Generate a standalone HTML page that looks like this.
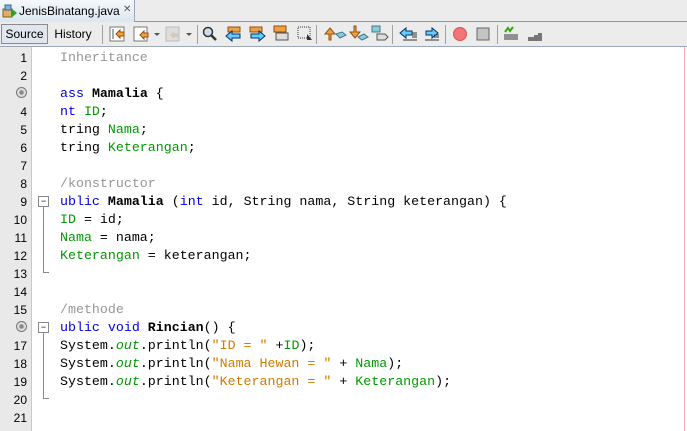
<!DOCTYPE html>
<html><head><style>
body{margin:0;width:687px;height:431px;overflow:hidden;background:#fff;font-family:"Liberation Sans",sans-serif;position:relative}
.tabbar{position:absolute;left:0;top:0;width:687px;height:21px;background:#ececec;border-bottom:1px solid #8a96a6}
.tab{position:absolute;left:0;top:0;width:134px;height:22px;background:linear-gradient(#f4f8fc,#dce6f0);border-right:1px solid #9aa8b8;font-size:12px}
.tb{position:absolute;left:0;top:22px;width:687px;height:24px;background:#ececec;border-bottom:1px solid #9aa8b8}
.btn{position:absolute;top:3px;height:18px;font-size:12px;line-height:18px;text-align:center}
.gut{position:absolute;left:0;top:47px;width:31px;height:384px;background:#e9e9e9;border-right:1px solid #c8c8c8}
.ln{position:absolute;left:0;width:27px;text-align:right;font-size:12px;color:#000;height:18px;line-height:18px}
.cd{position:absolute;left:60px;font-family:"Liberation Mono",monospace;font-size:13.3px;height:18px;line-height:18px;white-space:pre;color:#000}
.k{color:#0000e6}.g{color:#009900}.c{color:#969696}.s{color:#ce7b00}.i{color:#009900;font-style:italic}.b{font-weight:bold}
</style></head><body>
<div class="tabbar"><div class="tab">
<svg style="position:absolute;left:2px;top:3px" width="16" height="16"><rect x="1" y="6" width="9" height="8" fill="#e0b060" stroke="#806020"/><polygon points="9,5 15,10 9,15" fill="#30a030"/><rect x="3" y="2" width="6" height="5" fill="#80b0e0" stroke="#406080"/></svg>
<span style="position:absolute;left:19px;top:4px">JenisBinatang.java</span>
<span style="position:absolute;left:123px;top:4px;font-size:10px;color:#555">✕</span></div></div>
<div class="tb">
<div class="btn" style="left:1px;width:45px;border:1px solid #8a8a8a;background:#dfe6ee;top:2px">Source</div>
<div class="btn" style="left:52px;width:42px">History</div>
<svg style="position:absolute;left:0;top:0" width="687" height="24">
<g fill="#a0a0a0"><rect x="102" y="3" width="1" height="19"/><rect x="197" y="3" width="1" height="19"/><rect x="316" y="3" width="1" height="19"/><rect x="392" y="3" width="1" height="19"/><rect x="445" y="3" width="1" height="19"/><rect x="497" y="3" width="1" height="19"/></g>
<rect x="110" y="5" width="14" height="14" fill="#fff" stroke="#777"/><path d="M113 7v10" stroke="#555"/><path d="M116 12l4-4v2h4v4h-4v2z" fill="#f0a040" stroke="#905010"/>
<rect x="134" y="5" width="13" height="14" fill="#fff" stroke="#777"/><path d="M140 13l4-4v2h4v4h-4v2z" fill="#f0a040" stroke="#905010"/>
<path d="M154 11l3 3 3-3z" fill="#555"/>
<rect x="166" y="5" width="13" height="14" fill="#ddd" stroke="#bbb"/><path d="M170 13l4-4v2h4v4h-4v2z" fill="#d8c8b8"/>
<path d="M186 11l3 3 3-3z" fill="#555"/>
<circle cx="208" cy="10" r="4.5" fill="#cde" stroke="#333" stroke-width="1.5"/><path d="M211 13l5 5" stroke="#333" stroke-width="2.5"/>
<rect x="228" y="5" width="12" height="5" fill="#f0a040" stroke="#905010"/><path d="M226 14l6-5v3h8v4h-8v3z" fill="#6cf" stroke="#036"/>
<rect x="250" y="5" width="12" height="5" fill="#f0a040" stroke="#905010"/><path d="M265 14l-6-5v3h-8v4h8v3z" fill="#6cf" stroke="#036"/>
<rect x="274" y="4" width="12" height="6" fill="#f0a040" stroke="#905010"/><rect x="276" y="11" width="12" height="7" fill="#ddd" stroke="#555"/>
<rect x="298" y="5" width="12" height="11" fill="none" stroke="#333" stroke-dasharray="1,1"/><path d="M307 12l5 6h-5z" fill="#333"/>
<path d="M329 18v-6h-4l5-6 5 6h-4v6z" fill="#f0a040" stroke="#905010"/><path d="M336 12l6-2 4 3-6 3z" fill="#8cd" stroke="#478"/>
<path d="M354 4v6h-4l5 6 5-6h-4V4z" fill="#f0a040" stroke="#905010"/><path d="M358 15l6-3 4 3-6 3z" fill="#8cd" stroke="#478"/>
<rect x="372" y="4" width="8" height="6" fill="#8cd" stroke="#478"/><path d="M377 12h8l3 3-3 3h-8z" fill="#ddd" stroke="#555"/>
<path d="M400 11l6-5v3h6v4h-6v3z" fill="#6cf" stroke="#036"/><path d="M403 18h14M412 15h5M412 13h5M412 11h5" stroke="#333"/>
<path d="M438 11l-6-5v3h-6v4h6v3z" fill="#6cf" stroke="#036"/><path d="M425 18h14M434 15h5M434 13h5" stroke="#333"/>
<circle cx="460" cy="12" r="6.5" fill="#f07575" stroke="#d55"/>
<rect x="477" y="6" width="12" height="12" fill="#c4c4c4" stroke="#666"/>
<path d="M505 10l3-4 2 3 3-4" stroke="#3a0" stroke-width="2" fill="none"/><path d="M504 13h14M504 15h14M504 17h14" stroke="#333"/>
<path d="M528 18h14M528 16h14M534 14h8M538 12h4" stroke="#000"/>
</svg>
</div>
<div class="gut"></div>
<div style="position:absolute;left:684px;top:47px;width:1px;height:384px;background:#f4b0b0"></div>
<div style="position:absolute;left:38px;top:196px;width:9px;height:9px;border:1px solid #888;background:#fff;font-size:9px;line-height:8px;text-align:center">−</div>
<div style="position:absolute;left:43px;top:206px;width:5px;height:66px;border-left:1px solid #888;border-bottom:1px solid #888"></div>
<div style="position:absolute;left:38px;top:322px;width:9px;height:9px;border:1px solid #888;background:#fff;font-size:9px;line-height:8px;text-align:center">−</div>
<div style="position:absolute;left:43px;top:332px;width:5px;height:66px;border-left:1px solid #888;border-bottom:1px solid #888"></div>
<div class="ln" style="top:49px">1</div><div class="ln" style="top:85px"><span style="display:inline-block;width:9px;height:9px;border-radius:50%;border:1px solid #777;background:radial-gradient(#888 30%,#ddd 40%)"></span></div>
<div class="ln" style="top:67px">2</div><div class="ln" style="top:103px">4</div><div class="ln" style="top:121px">5</div><div class="ln" style="top:139px">6</div><div class="ln" style="top:157px">7</div><div class="ln" style="top:175px">8</div><div class="ln" style="top:193px">9</div><div class="ln" style="top:211px">10</div><div class="ln" style="top:229px">11</div><div class="ln" style="top:247px">12</div><div class="ln" style="top:265px">13</div><div class="ln" style="top:283px">14</div><div class="ln" style="top:301px">15</div><div class="ln" style="top:319px"><span style="display:inline-block;width:9px;height:9px;border-radius:50%;border:1px solid #777;background:radial-gradient(#888 30%,#ddd 40%)"></span></div><div class="ln" style="top:337px">17</div><div class="ln" style="top:355px">18</div><div class="ln" style="top:373px">19</div><div class="ln" style="top:391px">20</div><div class="ln" style="top:409px">21</div>
<div class="cd c" style="top:49px">Inheritance</div>
<div class="cd" style="top:85px"><span class="k">ass</span> <span class="b">Mamalia</span> {</div>
<div class="cd" style="top:103px"><span class="k">nt</span> <span class="g">ID</span>;</div>
<div class="cd" style="top:121px">tring <span class="g">Nama</span>;</div>
<div class="cd" style="top:139px">tring <span class="g">Keterangan</span>;</div>
<div class="cd c" style="top:175px">/konstructor</div>
<div class="cd" style="top:193px"><span class="k">ublic</span> <span class="b">Mamalia</span> (<span class="k">int</span> id, String nama, String keterangan) {</div>
<div class="cd" style="top:211px"><span class="g">ID</span> = id;</div>
<div class="cd" style="top:229px"><span class="g">Nama</span> = nama;</div>
<div class="cd" style="top:247px"><span class="g">Keterangan</span> = keterangan;</div>
<div class="cd c" style="top:301px">/methode</div>
<div class="cd" style="top:319px"><span class="k">ublic</span> <span class="k">void</span> <span class="b">Rincian</span>() {</div>
<div class="cd" style="top:337px">System.<span class="i">out</span>.println(<span class="s">"ID = "</span> +<span class="g">ID</span>);</div>
<div class="cd" style="top:355px">System.<span class="i">out</span>.println(<span class="s">"Nama Hewan = "</span> + <span class="g">Nama</span>);</div>
<div class="cd" style="top:373px">System.<span class="i">out</span>.println(<span class="s">"Keterangan = "</span> + <span class="g">Keterangan</span>);</div>
</body></html>
